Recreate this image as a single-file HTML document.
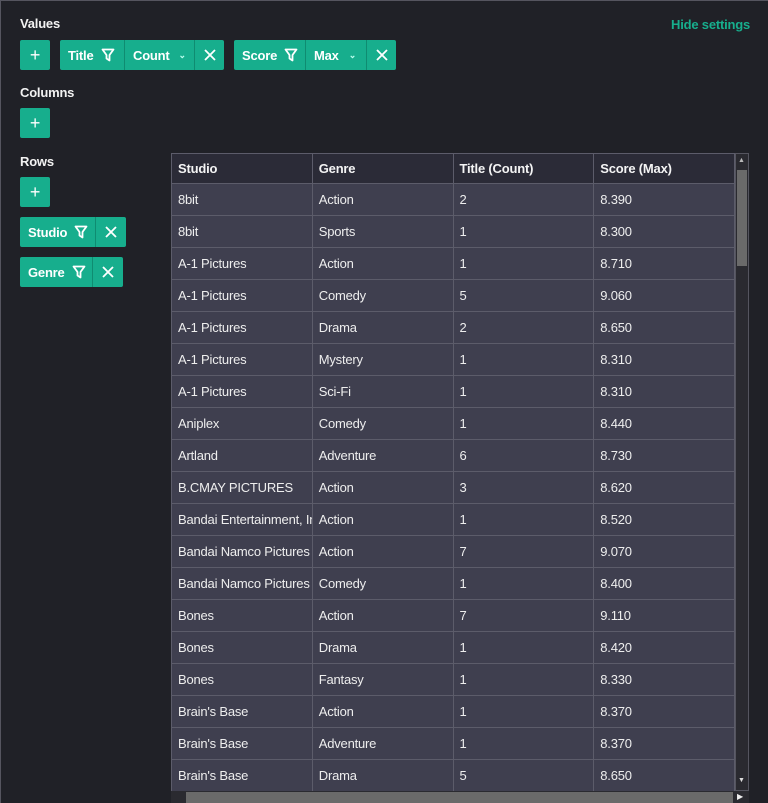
<!DOCTYPE html>
<html><head><meta charset="utf-8"><style>
*{box-sizing:border-box;margin:0;padding:0}
body{width:768px;height:803px;overflow:hidden;background:#202127;font-family:"Liberation Sans",sans-serif;color:#f0f0f0;position:relative}
.lbl{position:absolute;font-size:13px;font-weight:bold;color:#f2f2f2;letter-spacing:-0.2px}
.b{position:absolute;background:#17ae8d;border-radius:2px;height:30px;color:#fff;font-size:13px;font-weight:bold;display:flex;letter-spacing:-0.2px}
.seg{height:30px;display:flex;align-items:center;padding-left:8px;border-right:1px solid #0f8c71;position:relative}
.seg:last-child{border-right:none}
.x{justify-content:center;padding:0}
.plus{width:30px;justify-content:center;padding:0;font-size:18px;font-weight:normal}
svg{display:block}
table{position:absolute;left:171px;top:153px;border-collapse:collapse;width:564px;table-layout:fixed;font-size:13px;letter-spacing:-0.2px}
td,th{height:32px;border:1px solid #5c5c6a;padding:0 6px;white-space:nowrap;overflow:hidden;text-align:left;background:#3f3f4f;color:#eee;font-weight:normal}
th{height:30px;background:#2b2b37;font-weight:bold;color:#f4f4f4}
</style></head><body>
<div style="position:absolute;left:0;top:0;width:768px;height:1px;background:#55555f"></div>
<div style="position:absolute;left:0;top:0;width:1px;height:803px;background:#55555f"></div>
<div class="lbl" style="left:20px;top:16px">Values</div>
<div class="lbl" style="left:671px;top:17px;color:#17ae8d">Hide settings</div>
<div class="b" style="left:20px;top:40px;width:30px"><div class="seg plus">+</div></div>
<div class="b" style="left:60px;top:40px;width:164px">
 <div class="seg" style="width:65px">Title<svg style="margin-left:7px" width="14" height="14" viewBox="0 0 14 14"><path d="M1.5 1.5h11L8.5 7v5.5L5.5 10.5V7z" fill="none" stroke="#fff" stroke-width="1.8" stroke-linejoin="round"/></svg></div>
 <div class="seg" style="width:70px">Count<span style="margin-left:9px;font-size:9px;color:#bfe">&#8964;</span></div>
 <div class="seg x" style="width:29px"><svg width="12" height="12"><path d="M1 1L11 11M11 1L1 11" stroke="#fff" stroke-width="1.8"/></svg></div>
</div>
<div class="b" style="left:234px;top:40px;width:162px">
 <div class="seg" style="width:72px">Score<svg style="margin-left:7px" width="14" height="14" viewBox="0 0 14 14"><path d="M1.5 1.5h11L8.5 7v5.5L5.5 10.5V7z" fill="none" stroke="#fff" stroke-width="1.8" stroke-linejoin="round"/></svg></div>
 <div class="seg" style="width:61px">Max<span style="margin-left:10px;font-size:9px;color:#bfe">&#8964;</span></div>
 <div class="seg x" style="width:29px"><svg width="12" height="12"><path d="M1 1L11 11M11 1L1 11" stroke="#fff" stroke-width="1.8"/></svg></div>
</div>
<div class="lbl" style="left:20px;top:85px">Columns</div>
<div class="b" style="left:20px;top:108px;width:30px"><div class="seg plus">+</div></div>
<div class="lbl" style="left:20px;top:154px">Rows</div>
<div class="b" style="left:20px;top:177px;width:30px"><div class="seg plus">+</div></div>
<div class="b" style="left:20px;top:217px;width:106px">
 <div class="seg" style="width:76px">Studio<svg style="margin-left:7px" width="14" height="14" viewBox="0 0 14 14"><path d="M1.5 1.5h11L8.5 7v5.5L5.5 10.5V7z" fill="none" stroke="#fff" stroke-width="1.8" stroke-linejoin="round"/></svg></div>
 <div class="seg x" style="width:30px"><svg width="12" height="12"><path d="M1 1L11 11M11 1L1 11" stroke="#fff" stroke-width="1.8"/></svg></div>
</div>
<div class="b" style="left:20px;top:257px;width:103px">
 <div class="seg" style="width:73px">Genre<svg style="margin-left:7px" width="14" height="14" viewBox="0 0 14 14"><path d="M1.5 1.5h11L8.5 7v5.5L5.5 10.5V7z" fill="none" stroke="#fff" stroke-width="1.8" stroke-linejoin="round"/></svg></div>
 <div class="seg x" style="width:30px"><svg width="12" height="12"><path d="M1 1L11 11M11 1L1 11" stroke="#fff" stroke-width="1.8"/></svg></div>
</div>
<table>
<tr><th>Studio</th><th>Genre</th><th>Title (Count)</th><th>Score (Max)</th></tr>
<tr><td>8bit</td><td>Action</td><td>2</td><td>8.390</td></tr>
<tr><td>8bit</td><td>Sports</td><td>1</td><td>8.300</td></tr>
<tr><td>A-1 Pictures</td><td>Action</td><td>1</td><td>8.710</td></tr>
<tr><td>A-1 Pictures</td><td>Comedy</td><td>5</td><td>9.060</td></tr>
<tr><td>A-1 Pictures</td><td>Drama</td><td>2</td><td>8.650</td></tr>
<tr><td>A-1 Pictures</td><td>Mystery</td><td>1</td><td>8.310</td></tr>
<tr><td>A-1 Pictures</td><td>Sci-Fi</td><td>1</td><td>8.310</td></tr>
<tr><td>Aniplex</td><td>Comedy</td><td>1</td><td>8.440</td></tr>
<tr><td>Artland</td><td>Adventure</td><td>6</td><td>8.730</td></tr>
<tr><td>B.CMAY PICTURES</td><td>Action</td><td>3</td><td>8.620</td></tr>
<tr><td>Bandai Entertainment, Inc.</td><td>Action</td><td>1</td><td>8.520</td></tr>
<tr><td>Bandai Namco Pictures</td><td>Action</td><td>7</td><td>9.070</td></tr>
<tr><td>Bandai Namco Pictures</td><td>Comedy</td><td>1</td><td>8.400</td></tr>
<tr><td>Bones</td><td>Action</td><td>7</td><td>9.110</td></tr>
<tr><td>Bones</td><td>Drama</td><td>1</td><td>8.420</td></tr>
<tr><td>Bones</td><td>Fantasy</td><td>1</td><td>8.330</td></tr>
<tr><td>Brain's Base</td><td>Action</td><td>1</td><td>8.370</td></tr>
<tr><td>Brain's Base</td><td>Adventure</td><td>1</td><td>8.370</td></tr>
<tr><td>Brain's Base</td><td>Drama</td><td>5</td><td>8.650</td></tr>
</table>
<div style="position:absolute;left:735px;top:153px;width:14px;height:638px;background:#2a2a30;border:1px solid #55555f"></div>
<div style="position:absolute;left:737px;top:170px;width:10px;height:96px;background:#6a6a6a"></div>
<div style="position:absolute;left:738px;top:157px;font-size:7px;color:#bbb">&#9650;</div>
<div style="position:absolute;left:738px;top:777px;font-size:7px;color:#ddd">&#9660;</div>
<div style="position:absolute;left:171px;top:791px;width:578px;height:12px;background:#2a2a30"></div>
<div style="position:absolute;left:186px;top:792px;width:547px;height:11px;background:#6a6a6a"></div>
<div style="position:absolute;left:737px;top:792px;font-size:8px;color:#eee">&#9654;</div>
</body></html>
